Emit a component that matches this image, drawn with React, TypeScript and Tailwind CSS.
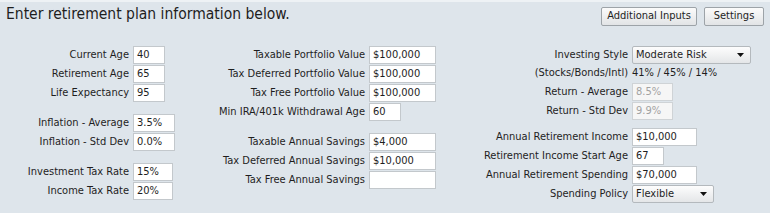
import React from 'react';

type Row = {
  label: string;
  value?: string;
  w?: string;
  kind?: 'input' | 'disabled' | 'select' | 'text';
  mt?: string;
  h?: string;
};

const col1: Row[] = [
  { label: 'Current Age', value: '40', w: 'w-[32px]' },
  { label: 'Retirement Age', value: '65', w: 'w-[32px]' },
  { label: 'Life Expectancy', value: '95', w: 'w-[32px]' },
  { label: 'Inflation - Average', value: '3.5%', w: 'w-[42px]', mt: 'mt-[11px]' },
  { label: 'Inflation - Std Dev', value: '0.0%', w: 'w-[42px]' },
  { label: 'Investment Tax Rate', value: '15%', w: 'w-[40px]', mt: 'mt-[11px]' },
  { label: 'Income Tax Rate', value: '20%', w: 'w-[40px]' },
];

const col2: Row[] = [
  { label: 'Taxable Portfolio Value', value: '$100,000', w: 'w-[67px]' },
  { label: 'Tax Deferred Portfolio Value', value: '$100,000', w: 'w-[67px]' },
  { label: 'Tax Free Portfolio Value', value: '$100,000', w: 'w-[67px]' },
  { label: 'Min IRA/401k Withdrawal Age', value: '60', w: 'w-[32px]' },
  { label: 'Taxable Annual Savings', value: '$4,000', w: 'w-[67px]', mt: 'mt-[11px]' },
  { label: 'Tax Deferred Annual Savings', value: '$10,000', w: 'w-[67px]' },
  { label: 'Tax Free Annual Savings', value: '', w: 'w-[67px]' },
];

const col3: Row[] = [
  { label: 'Investing Style', value: 'Moderate Risk', w: 'w-[119px]', kind: 'select' },
  { label: '(Stocks/Bonds/Intl)', value: '41% / 45% / 14%', kind: 'text', h: 'h-[17px]' },
  { label: 'Return - Average', value: '8.5%', w: 'w-[41px]', kind: 'disabled' },
  { label: 'Return - Std Dev', value: '9.9%', w: 'w-[41px]', kind: 'disabled' },
  { label: 'Annual Retirement Income', value: '$10,000', w: 'w-[65px]', mt: 'mt-[7px]' },
  { label: 'Retirement Income Start Age', value: '67', w: 'w-[32px]' },
  { label: 'Annual Retirement Spending', value: '$70,000', w: 'w-[65px]' },
  { label: 'Spending Policy', value: 'Flexible', w: 'w-[82px]', kind: 'select' },
];

function Field({ row }: { row: Row }) {
  if (row.kind === 'text') {
    return <span>{row.value}</span>;
  }
  if (row.kind === 'select') {
    return (
      <div
        className={`${row.w} h-full flex items-center justify-between pl-[3px] pr-[6px] border border-[#b4b9bd] rounded-[2px] bg-gradient-to-b from-[#fdfdfd] to-[#e4e6e8]`}
      >
        <span>{row.value}</span>
        <svg width="7" height="4" viewBox="0 0 7 4">
          <path d="M0 0h7L3.5 4z" fill="#111" />
        </svg>
      </div>
    );
  }
  const disabled = row.kind === 'disabled';
  return (
    <div
      className={`${row.w} h-full flex items-center pl-[3px] border ${
        disabled ? 'border-[#cfd3d6] bg-[#f6f6f6] text-[#a2a2a2]' : 'border-[#c3c8cc] bg-white'
      }`}
    >
      {row.value}
    </div>
  );
}

function Column({ rows, labelW }: { rows: Row[]; labelW: string }) {
  return (
    <div className="flex flex-col gap-px">
      {rows.map((row) => (
        <div key={row.label} className={`flex items-center gap-[4px] ${row.h ?? 'h-[18px]'} ${row.mt ?? ''}`}>
          <span className={`${labelW} text-right whitespace-nowrap`}>{row.label}</span>
          <Field row={row} />
        </div>
      ))}
    </div>
  );
}

export default function App() {
  return (
    <div className="w-[770px] h-[213px] bg-[#dee5eb] border-t-2 border-[#eef2f5] text-[#1e1e1e] text-[11px] font-['DejaVu_Sans_Condensed','DejaVu_Sans',sans-serif] overflow-hidden">
      <div className="flex items-start justify-between pl-[6px] pr-[6px] pt-[3px]">
        <h1 className="text-[15.5px] leading-[18px]">Enter retirement plan information below.</h1>
        <div className="flex gap-[7px] pt-[2px]">
          <button className="w-[96px] h-[19px] border border-[#9da3a8] rounded-[2px] bg-gradient-to-b from-[#fbfbfb] to-[#e2e4e6]">
            Additional Inputs
          </button>
          <button className="w-[60px] h-[19px] border border-[#9da3a8] rounded-[2px] bg-gradient-to-b from-[#fbfbfb] to-[#e2e4e6]">
            Settings
          </button>
        </div>
      </div>
      <div className="flex mt-[20px]">
        <Column rows={col1} labelW="w-[129px]" />
        <div className="ml-[15px]">
          <Column rows={col2} labelW="w-[175px]" />
        </div>
        <div className="ml-[19px]">
          <Column rows={col3} labelW="w-[173px]" />
        </div>
      </div>
    </div>
  );
}
